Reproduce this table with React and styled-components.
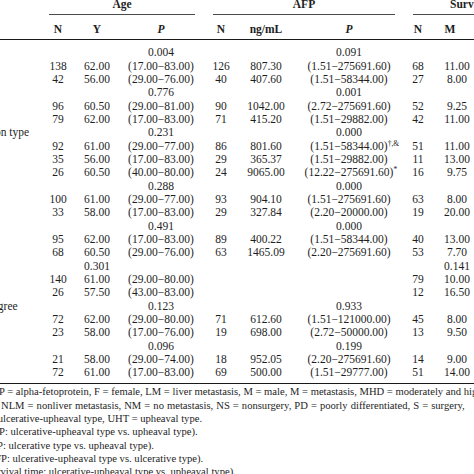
import React from 'react';
import styled, { createGlobalStyle, css } from 'styled-components';

const GlobalStyle = createGlobalStyle`
  html, body {
    margin: 0;
    padding: 0;
    background: #ffffff;
  }
  body {
    font-family: "Liberation Serif", "Times New Roman", serif;
    color: #1e1e1e;
  }
`;

const ROW = '13.33px';

const columns = css`
  display: grid;
  grid-template-columns: 126px 36px 42px 86px 34px 56px 110px 28px 50px 56px;
`;

const Page = styled.div`
  width: 474px;
  height: 474px;
  overflow: hidden;
  background: #ffffff;
`;

const Sheet = styled.div`
  margin-left: -86px;
  margin-top: -1.67px;
  width: 624px;
  font-size: 11.5px;
`;

const Head = styled.div`
  ${columns};
  border-bottom: 1px solid #1a1a1a;
`;

const GroupCell = styled.div`
  grid-column: ${({ $from, $to }) => `${$from} / ${$to}`};
  grid-row: 1;
  margin: 0 9px;
  padding: 0 0 2px ${({ $pl }) => $pl || 0}px;
  border-bottom: 1px solid #4a4a4a;
  text-align: ${({ $pl }) => ($pl ? 'left' : 'center')};
  font-weight: 700;
  line-height: ${ROW};
  white-space: nowrap;
`;

const Corner = styled.div`
  grid-column: 1;
  grid-row: 1 / 3;
  align-self: center;
  padding-left: 2px;
  font-weight: 700;
  line-height: ${ROW};
`;

const ColHead = styled.div`
  grid-row: 2;
  grid-column: ${({ $col }) => $col};
  padding: 8px ${({ $pr }) => $pr || 0}px 3.33px 0;
  text-align: center;
  font-weight: 700;
  font-style: ${({ $italic }) => ($italic ? 'italic' : 'normal')};
  line-height: ${ROW};
`;

const Body = styled.div`
  ${columns};
  padding: 6px 0 3px;
  border-bottom: 1px solid #1a1a1a;
`;

const Label = styled.div`
  padding-left: ${({ $sub }) => ($sub ? 10 : 2)}px;
  line-height: ${ROW};
  height: ${ROW};
  white-space: nowrap;
`;

const Cell = styled.div`
  text-align: center;
  line-height: ${ROW};
  height: ${ROW};
  white-space: nowrap;
`;

const Sup = styled.span`
  display: inline-block;
  width: 0;
  vertical-align: top;
  line-height: 1;
  font-size: 7.5px;
  white-space: nowrap;
`;

const Notes = styled.div`
  padding-top: 1.67px;
  margin-left: 86px;
  font-size: 10.6px;
`;

const Note = styled.div`
  margin-left: ${({ $shift }) => $shift}px;
  line-height: ${ROW};
  white-space: nowrap;
  word-spacing: ${({ $ws }) => $ws || 0}px;
`;

const rows = [
  ['Gender', '', '', '0.004', '', '', '0.091', '', '', '0.262'],
  ['Male', '138', '62.00', '(17.00−83.00)', '126', '807.30', '(1.51−275691.60)', '68', '11.00', ''],
  ['Female', '42', '56.00', '(29.00−76.00)', '40', '407.60', '(1.51−58344.00)', '27', '8.00', ''],
  ['Metastasis', '', '', '0.776', '', '', '0.001', '', '', '0.417'],
  ['M', '96', '60.50', '(29.00−81.00)', '90', '1042.00', '(2.72−275691.60)', '52', '9.25', ''],
  ['NM', '79', '62.00', '(17.00−83.00)', '71', '415.20', '(1.51−29882.00)', '42', '11.00', ''],
  ['Gross classification type', '', '', '0.231', '', '', '0.000', '', '', '0.038'],
  ['UUT', '92', '61.00', '(29.00−77.00)', '86', '801.60', { t: '(1.51−58344.00)', sup: '†,&' }, '51', '11.00', ''],
  ['UT', '35', '56.00', '(17.00−83.00)', '29', '365.37', '(1.51−29882.00)', '11', '13.00', ''],
  ['UHT', '26', '60.50', '(40.00−80.00)', '24', '9065.00', { t: '(12.22−275691.60)', sup: '*' }, '16', '9.75', ''],
  ['Surgery', '', '', '0.288', '', '', '0.000', '', '', '0.000'],
  ['S', '100', '61.00', '(29.00−77.00)', '93', '904.10', '(1.51−275691.60)', '63', '8.00', ''],
  ['NS', '33', '58.00', '(17.00−83.00)', '29', '327.84', '(2.20−20000.00)', '19', '20.00', ''],
  ['Metastasis site', '', '', '0.491', '', '', '0.000', '', '', '0.011'],
  ['LM', '95', '62.00', '(17.00−83.00)', '89', '400.22', '(1.51−58344.00)', '40', '13.00', ''],
  ['NLM', '68', '60.50', '(29.00−76.00)', '63', '1465.09', '(2.20−275691.60)', '53', '7.70', ''],
  ['HBV', '', '0.301', '', '', '', '', '', '0.141', ''],
  ['Positive', '140', '61.00', '(29.00−80.00)', '', '', '', '79', '10.00', ''],
  ['Negative', '26', '57.50', '(43.00−83.00)', '', '', '', '12', '16.50', ''],
  ['Differentiation degree', '', '', '0.123', '', '', '0.933', '', '', '0.529'],
  ['PD', '72', '62.00', '(29.00−80.00)', '71', '612.60', '(1.51−121000.00)', '45', '8.00', ''],
  ['MHD', '23', '58.00', '(17.00−76.00)', '19', '698.00', '(2.72−50000.00)', '13', '9.50', ''],
  ['Ascites', '', '', '0.096', '', '', '0.199', '', '', '0.024'],
  ['Yes', '21', '58.00', '(29.00−74.00)', '18', '952.05', '(2.20−275691.60)', '14', '9.00', ''],
  ['No', '72', '61.00', '(17.00−83.00)', '69', '500.00', '(1.51−29777.00)', '51', '14.00', ''],
];

const notes = [
  { shift: -14.5, text: 'AFP = alpha-fetoprotein, F = female, LM = liver metastasis, M = male, M = metastasis, MHD = moderately and highly differentiated,' },
  { shift: 1, ws: 0.4, text: 'NLM = nonliver metastasis, NM = no metastasis, NS = nonsurgery, PD = poorly differentiated, S = surgery,' },
  { shift: -2.3, text: 'ulcerative-upheaval type, UHT = upheaval type.' },
  { shift: -18, text: '(AFP: ulcerative-upheaval type vs. upheaval type).' },
  { shift: -20, text: '(AFP: ulcerative type vs. upheaval type).' },
  { shift: -16, text: '(AFP: ulcerative-upheaval type vs. ulcerative type).' },
  { shift: -16, text: '(survival time: ulcerative-upheaval type vs. upheaval type).' },
];

const isGroup = (row) => row[1] === '' && row[4] === '';

const Value = ({ v }) => {
  if (v && typeof v === 'object') {
    return (
      <Cell>
        {v.t}
        <Sup>{v.sup}</Sup>
      </Cell>
    );
  }
  return <Cell>{v}</Cell>;
};

const App = () => {
  return (
    <Page>
      <GlobalStyle />
      <Sheet>
        <Head>
          <Corner>Characteristics</Corner>
          <GroupCell $from={2} $to={5}>Age</GroupCell>
          <GroupCell $from={5} $to={8}>AFP</GroupCell>
          <GroupCell $from={8} $to={11} $pl={37}>Survival time</GroupCell>
          <ColHead $col={2}>N</ColHead>
          <ColHead $col={3}>Y</ColHead>
          <ColHead $col={4} $italic>P</ColHead>
          <ColHead $col={5}>N</ColHead>
          <ColHead $col={6}>ng/mL</ColHead>
          <ColHead $col={7} $italic>P</ColHead>
          <ColHead $col={8}>N</ColHead>
          <ColHead $col={9} $pr={14}>M</ColHead>
          <ColHead $col={10} $italic>P</ColHead>
        </Head>
        <Body>
          {rows.map((row, i) => (
            <React.Fragment key={i}>
              <Label $sub={!isGroup(row)}>{row[0]}</Label>
              {row.slice(1).map((v, j) => (
                <Value key={j} v={v} />
              ))}
            </React.Fragment>
          ))}
        </Body>
        <Notes>
          {notes.map((n, i) => (
            <Note key={i} $shift={n.shift} $ws={n.ws}>
              {n.text}
            </Note>
          ))}
        </Notes>
      </Sheet>
    </Page>
  );
};

export default App;
